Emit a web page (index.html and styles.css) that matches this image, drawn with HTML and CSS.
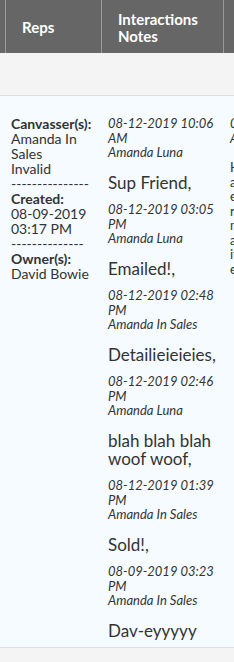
FILE: index.html
```html
<!DOCTYPE html>
<html>
<head>
<meta charset="utf-8">
<link rel="stylesheet" href="styles.css">
</head>
<body>
<div class="table">
  <div class="row head">
    <div class="cell c0"></div>
    <div class="cell c1"><span>Reps</span></div>
    <div class="cell c2"><span>Interactions Notes</span></div>
    <div class="cell c3"><span>Interaction Notes</span></div>
  </div>
  <div class="row filter">
    <div class="cell c0"></div>
    <div class="cell c1"></div>
    <div class="cell c2"></div>
    <div class="cell c3"></div>
  </div>
  <div class="row body">
    <div class="cell c0"></div>
    <div class="cell c1 reps">
      <div class="label">Canvasser(s):</div>
      <div>Amanda In Sales</div>
      <div>Invalid</div>
      <div>---------------</div>
      <div class="label">Created:</div>
      <div>08-09-2019 03:17 PM</div>
      <div>--------------</div>
      <div class="label">Owner(s):</div>
      <div>David Bowie</div>
    </div>
    <div class="cell c2 notes">
      <div class="note">
        <div class="meta">08-12-2019 10:06 AM<br>Amanda Luna</div>
        <div class="msg">Sup Friend,</div>
      </div>
      <div class="note">
        <div class="meta">08-12-2019 03:05 PM<br>Amanda Luna</div>
        <div class="msg">Emailed!,</div>
      </div>
      <div class="note">
        <div class="meta">08-12-2019 02:48 PM<br>Amanda In Sales</div>
        <div class="msg">Detailieieieies,</div>
      </div>
      <div class="note">
        <div class="meta">08-12-2019 02:46 PM<br>Amanda Luna</div>
        <div class="msg">blah blah blah woof woof,</div>
      </div>
      <div class="note">
        <div class="meta">08-12-2019 01:39 PM<br>Amanda In Sales</div>
        <div class="msg">Sold!,</div>
      </div>
      <div class="note last">
        <div class="meta">08-09-2019 03:23 PM<br>Amanda In Sales</div>
        <div class="msg">Dav-eyyyyy</div>
      </div>
    </div>
    <div class="cell c3 notes">
      <div class="meta">08-12-2019 10:06 AM<br>Amanda Luna</div>
      <div class="long">Hey there,<br>and welcome<br>everyone<br>reading<br>more<br>about<br>it in the<br>end</div>
    </div>
  </div>
</div>
</body>
</html>
```

FILE: styles.css
```css
html, body {
  margin: 0;
  padding: 0;
  overflow: hidden;
  background: #f4f4f4;
}

body {
  font-family: Lato, "Open Sans", sans-serif;
  color: #333;
}

.table {
  width: 480px;
}

.row {
  display: flex;
}

.c0 { width: 5px; flex: none; }
.c1 { width: 95px; flex: none; }
.c2 { width: 121px; flex: none; }
.c3 { width: 240px; flex: none; }

.head {
  height: 53px;
  background: #666666;
}

.head .cell {
  box-sizing: content-box;
  display: flex;
  align-items: center;
  padding-top: 2px;
  color: #ffffff;
  font-weight: bold;
  font-size: 15px;
  line-height: 17px;
}

.head .c1, .head .c2, .head .c3 {
  border-left: 1px solid #9a9a9a;
  padding-left: 16px;
}

.head .c1 { width: 79px; }
.head .c2 { width: 105px; }

.filter {
  height: 42px;
  background: #f4f4f4;
  border-bottom: 1px solid #dedede;
}

.filter .c1, .filter .c2, .filter .c3 {
  margin-left: 1px;
}

.body {
  background: #f5fbfe;
  border-bottom: 1px solid #e0e0e0;
}

.body .cell {
  box-sizing: border-box;
  padding-top: 20px;
}

.body .c1 {
  width: 96px;
  padding-left: 6px;
  padding-right: 4px;
}

.body .c2 {
  width: 122px;
  padding-left: 7px;
  padding-right: 4px;
}

.body .c3 {
  width: 240px;
  padding-left: 7px;
}

.reps {
  font-size: 14px;
  line-height: 15px;
}

.label {
  font-weight: bold;
}

.meta {
  font-size: 13px;
  line-height: 14.5px;
  font-style: italic;
}

.msg {
  font-size: 17px;
  line-height: 18px;
  margin: 14px 0 10.5px;
}

.note.last .msg {
  margin-bottom: 7px;
}

.long {
  font-size: 13px;
  line-height: 14.5px;
  margin-top: 15px;
}
```
